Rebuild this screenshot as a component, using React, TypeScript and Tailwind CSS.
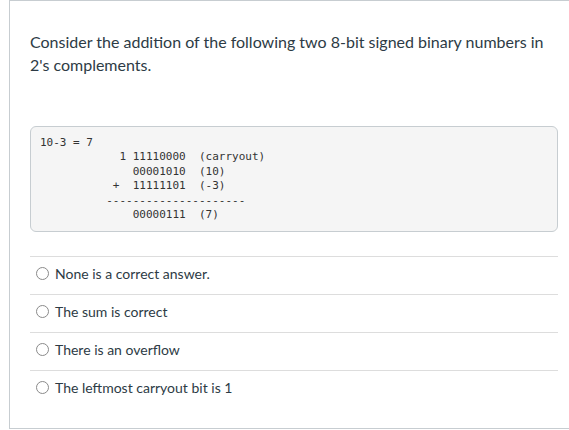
import React from 'react';

const code = [
  '10-3 = 7',
  '            1 11110000  (carryout)',
  '              00001010  (10)',
  '           +  11111101  (-3)',
  '          ---------------------',
  '              00000111  (7)',
].join('\n');

const answers = [
  'None is a correct answer.',
  'The sum is correct',
  'There is an overflow',
  'The leftmost carryout bit is 1',
];

const App: React.FC = () => {
  return (
    <div className="w-[569px] h-[430px] overflow-hidden bg-white">
      <div className="ml-[9px] w-[590px] h-[429px] border border-[#c7cdd1] bg-white pl-[20px] pt-[29px] font-['Lato','Noto_Sans',sans-serif] text-[#2d3b45]">
        <div className="w-[528px]">
          <p className="text-[16px] leading-[23px]">
            Consider the addition of the following two 8-bit signed binary numbers in 2's complements.
          </p>

          <pre className="mt-[50px] rounded-md border border-[#c7cdd1] bg-[#f5f5f5] px-[9px] pt-[9px] pb-[9px] font-['DejaVu_Sans_Mono',monospace] text-[11px] leading-[14.4px] text-[#333]">
            {code}
          </pre>

          <ul className="mt-[24px]">
            {answers.map((a) => (
              <li
                key={a}
                className="flex h-[38px] items-center border-t border-[#dddddd] pl-[6px] pb-[4px] text-[14px]"
              >
                <span className="h-[13px] w-[13px] rounded-full border border-[#8a8a8a] bg-white" />
                <span className="ml-[6px]">{a}</span>
              </li>
            ))}
          </ul>
        </div>
      </div>
    </div>
  );
};

export default App;
